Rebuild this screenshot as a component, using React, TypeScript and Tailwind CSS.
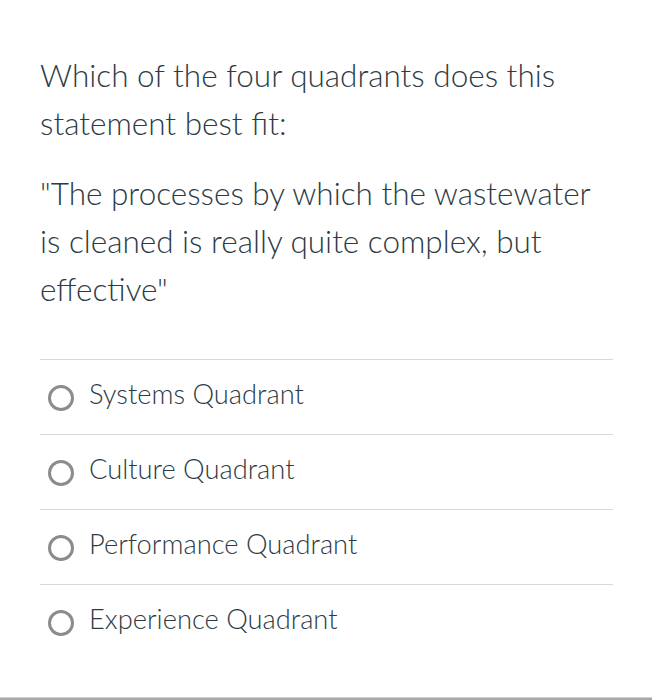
const options = [
  "Systems Quadrant",
  "Culture Quadrant",
  "Performance Quadrant",
  "Experience Quadrant",
];

function Radio() {
  return (
    <span className="mt-[6px] inline-block h-[26px] w-[26px] shrink-0 rounded-full border-[3px] border-[#8c8c8c] bg-white" />
  );
}

export default function App() {
  return (
    <div
      className="flex h-[700px] w-[652px] flex-col bg-white font-light text-[#2d3b45]"
      style={{ fontFamily: "Lato, 'Open Sans', sans-serif" }}
    >
      <div className="flex-1 pl-10 pr-[39px] pt-[51px]">
        <div className="text-[31.5px] leading-[48px]">
          <p>Which of the four quadrants does this statement best fit:</p>
          <p className="mt-[22px]">
            "The processes by which the wastewater is cleaned is really quite complex, but effective"
          </p>
        </div>
        <div className="mt-[46px]">
          {options.map((opt) => (
            <div
              key={opt}
              className="flex h-[75px] items-center gap-[15px] border-t border-[#d9d9d9] pb-[5px] pl-[8px] text-[27.3px]"
            >
              <Radio />
              <span>{opt}</span>
            </div>
          ))}
        </div>
      </div>
      <div className="h-[3px] w-full border-t border-[#d0d0d0] bg-[#a8a8a8]" />
    </div>
  );
}
